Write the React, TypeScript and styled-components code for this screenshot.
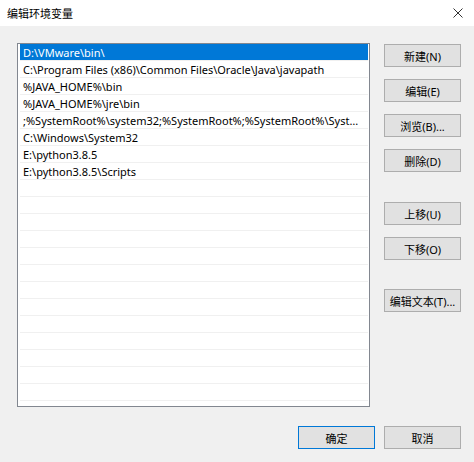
import React from 'react';
import styled, { createGlobalStyle } from 'styled-components';

const GlobalStyle = createGlobalStyle`
  html, body {
    margin: 0;
    padding: 0;
    background: #f0f0f0;
  }
  * {
    box-sizing: border-box;
  }
`;

const FONT = `"Noto Sans", "Noto Sans CJK SC", sans-serif`;

const Window = styled.div`
  width: 474px;
  height: 462px;
  display: flex;
  flex-direction: column;
  background: #f0f0f0;
  font-family: ${FONT};
  font-size: 11px;
  color: #000;
  overflow: hidden;
`;

const TitleBar = styled.div`
  height: 26px;
  flex-shrink: 0;
  background: #ffffff;
  display: flex;
  align-items: center;
  justify-content: space-between;
  padding: 0 8px 0 7px;
`;

const Title = styled.span`
  font-size: 11px;
  color: #000;
`;

const CloseButton = styled.div`
  width: 16px;
  height: 16px;
  display: flex;
  align-items: center;
  justify-content: center;
`;

const Body = styled.div`
  flex: 1;
  display: flex;
  flex-direction: column;
  padding: 17px 13px 13px 17px;
`;

const Main = styled.div`
  display: flex;
  gap: 14px;
  height: 364px;
`;

const List = styled.div`
  width: 353px;
  height: 364px;
  background: #ffffff;
  border: 1px solid #828790;
  padding: 0 1px 0 2px;
  overflow: hidden;
`;

const Row = styled.div<{ $selected?: boolean }>`
  height: 17px;
  line-height: 17px;
  padding: 0 4px 0 3px;
  border-bottom: 1px solid #f0f0f0;
  white-space: nowrap;
  overflow: hidden;
  text-overflow: ellipsis;
  background: ${(p) => (p.$selected ? '#0078d7' : 'transparent')};
  color: ${(p) => (p.$selected ? '#ffffff' : '#000000')};
`;

const SideColumn = styled.div`
  width: 77px;
  display: flex;
  flex-direction: column;
  padding-top: 1px;
`;

const Button = styled.div<{ $gap?: number; $default?: boolean }>`
  width: 77px;
  height: 23px;
  flex-shrink: 0;
  margin-top: ${(p) => p.$gap ?? 0}px;
  background: #e1e1e1;
  border: 1px solid ${(p) => (p.$default ? '#0078d7' : '#adadad')};
  display: flex;
  align-items: center;
  justify-content: center;
  font-size: 11px;
  color: #000;
  white-space: nowrap;
`;

const Footer = styled.div`
  display: flex;
  justify-content: flex-end;
  gap: 9px;
  margin-top: 19px;
`;

const paths = [
  'D:\\VMware\\bin\\',
  'C:\\Program Files (x86)\\Common Files\\Oracle\\Java\\javapath',
  '%JAVA_HOME%\\bin',
  '%JAVA_HOME%\\jre\\bin',
  ';%SystemRoot%\\system32;%SystemRoot%;%SystemRoot%\\System32\\Wbem',
  'C:\\Windows\\System32',
  'E:\\python3.8.5',
  'E:\\python3.8.5\\Scripts',
];

const sideButtons: { label: string; gap: number }[] = [
  { label: '新建(N)', gap: 0 },
  { label: '编辑(E)', gap: 12 },
  { label: '浏览(B)...', gap: 12 },
  { label: '删除(D)', gap: 12 },
  { label: '上移(U)', gap: 30 },
  { label: '下移(O)', gap: 12 },
  { label: '编辑文本(T)...', gap: 29 },
];

export default function App() {
  const rows = [...paths, ...Array(14).fill('')];
  return (
    <>
      <GlobalStyle />
      <Window>
        <TitleBar>
          <Title>编辑环境变量</Title>
          <CloseButton>
            <svg width="10" height="10" viewBox="0 0 10 10">
              <path d="M0.5 0.5 L9.5 9.5 M9.5 0.5 L0.5 9.5" stroke="#333" strokeWidth="1" fill="none" />
            </svg>
          </CloseButton>
        </TitleBar>
        <Body>
          <Main>
            <List>
              {rows.map((text, i) => (
                <Row key={i} $selected={i === 0}>
                  {text || '\u00a0'}
                </Row>
              ))}
            </List>
            <SideColumn>
              {sideButtons.map((b) => (
                <Button key={b.label} $gap={b.gap}>
                  {b.label}
                </Button>
              ))}
            </SideColumn>
          </Main>
          <Footer>
            <Button $default>确定</Button>
            <Button>取消</Button>
          </Footer>
        </Body>
      </Window>
    </>
  );
}
